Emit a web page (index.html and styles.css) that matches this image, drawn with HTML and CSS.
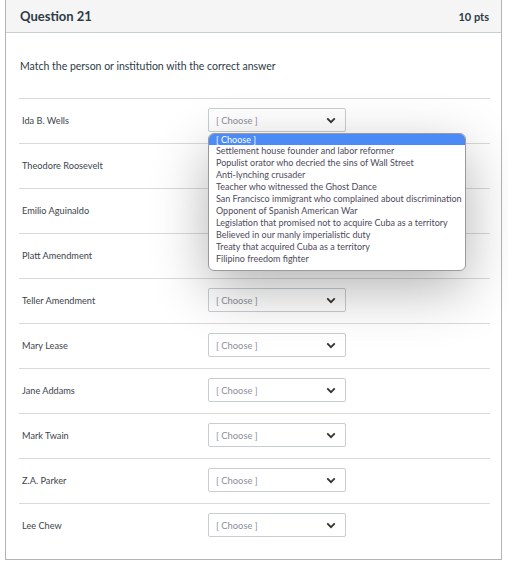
FILE: index.html
```html
<!DOCTYPE html>
<html>
<head>
<meta charset="utf-8">
<link rel="stylesheet" href="styles.css">
</head>
<body>
<div class="question">
  <div class="header">
    <span class="title">Question 21</span>
    <span class="pts">10 pts</span>
  </div>
  <div class="content">
    <p class="prompt">Match the person or institution with the correct answer</p>
    <div class="rows">
      <div class="row"><span class="label">Ida B. Wells</span><div class="select"><span>[ Choose ]</span><svg class="chev" viewBox="0 0 12 8"><path d="M1.5 1.5 L6 6 L10.5 1.5" fill="none" stroke="#333" stroke-width="2.2"/></svg></div></div>
      <div class="row"><span class="label">Theodore Roosevelt</span><div class="select"><span>[ Choose ]</span><svg class="chev" viewBox="0 0 12 8"><path d="M1.5 1.5 L6 6 L10.5 1.5" fill="none" stroke="#333" stroke-width="2.2"/></svg></div></div>
      <div class="row"><span class="label">Emilio Aguinaldo</span><div class="select"><span>[ Choose ]</span><svg class="chev" viewBox="0 0 12 8"><path d="M1.5 1.5 L6 6 L10.5 1.5" fill="none" stroke="#333" stroke-width="2.2"/></svg></div></div>
      <div class="row"><span class="label">Platt Amendment</span><div class="select"><span>[ Choose ]</span><svg class="chev" viewBox="0 0 12 8"><path d="M1.5 1.5 L6 6 L10.5 1.5" fill="none" stroke="#333" stroke-width="2.2"/></svg></div></div>
      <div class="row"><span class="label">Teller Amendment</span><div class="select"><span>[ Choose ]</span><svg class="chev" viewBox="0 0 12 8"><path d="M1.5 1.5 L6 6 L10.5 1.5" fill="none" stroke="#333" stroke-width="2.2"/></svg></div></div>
      <div class="row"><span class="label">Mary Lease</span><div class="select"><span>[ Choose ]</span><svg class="chev" viewBox="0 0 12 8"><path d="M1.5 1.5 L6 6 L10.5 1.5" fill="none" stroke="#333" stroke-width="2.2"/></svg></div></div>
      <div class="row"><span class="label">Jane Addams</span><div class="select"><span>[ Choose ]</span><svg class="chev" viewBox="0 0 12 8"><path d="M1.5 1.5 L6 6 L10.5 1.5" fill="none" stroke="#333" stroke-width="2.2"/></svg></div></div>
      <div class="row"><span class="label">Mark Twain</span><div class="select"><span>[ Choose ]</span><svg class="chev" viewBox="0 0 12 8"><path d="M1.5 1.5 L6 6 L10.5 1.5" fill="none" stroke="#333" stroke-width="2.2"/></svg></div></div>
      <div class="row"><span class="label">Z.A. Parker</span><div class="select"><span>[ Choose ]</span><svg class="chev" viewBox="0 0 12 8"><path d="M1.5 1.5 L6 6 L10.5 1.5" fill="none" stroke="#333" stroke-width="2.2"/></svg></div></div>
      <div class="row"><span class="label">Lee Chew</span><div class="select"><span>[ Choose ]</span><svg class="chev" viewBox="0 0 12 8"><path d="M1.5 1.5 L6 6 L10.5 1.5" fill="none" stroke="#333" stroke-width="2.2"/></svg></div></div>
    </div>
  </div>
</div>
<ul class="dropdown">
  <li class="selected">[ Choose ]</li>
  <li>Settlement house founder and labor reformer</li>
  <li>Populist orator who decried the sins of Wall Street</li>
  <li>Anti-lynching crusader</li>
  <li>Teacher who witnessed the Ghost Dance</li>
  <li>San Francisco immigrant who complained about discrimination</li>
  <li>Opponent of Spanish American War</li>
  <li>Legislation that promised not to acquire Cuba as a territory</li>
  <li>Believed in our manly imperialistic duty</li>
  <li>Treaty that acquired Cuba as a territory</li>
  <li>Filipino freedom fighter</li>
</ul>
</body>
</html>
```

FILE: styles.css
```css
html, body {
  margin: 0;
  padding: 0;
  background: #fff;
  font-family: Lato, "Open Sans", sans-serif;
  color: #2d3b45;
}
.question {
  margin-left: 5px;
  width: 495px;
  border: 1px solid #b4b4b4;
  border-top: none;
}
.header {
  height: 32px;
  background: #f5f5f5;
  border-bottom: 1px solid #c7cdd1;
  display: flex;
  align-items: center;
  justify-content: space-between;
  padding: 0 12px 0 14px;
}
.title {
  font-size: 13px;
  font-weight: 700;
  color: #2d3b45;
}
.pts {
  font-size: 11px;
  font-weight: 700;
  color: #2d3b45;
}
.content {
  padding: 0 11px 11px 13px;
}
.prompt {
  margin: 0;
  padding: 26px 0 0 1px;
  height: 39px;
  font-size: 10.5px;
  line-height: 14px;
  color: #2d3b45;
}
.row {
  height: 42px;
  padding-bottom: 2px;
  border-top: 1px solid #dadada;
  display: flex;
  align-items: center;
}
.label {
  width: 186px;
  padding-left: 3px;
  font-size: 9.2px;
  color: #3d454c;
}
.select {
  height: 22px;
  border: 1px solid #c7cdd1;
  border-radius: 2px;
  background: #fff;
  display: flex;
  align-items: center;
  justify-content: space-between;
  padding: 0 9px 0 7px;
  box-sizing: content-box;
  width: 120px;
  font-size: 9.4px;
  color: #8b8f9a;
}
.chev {
  width: 10px;
  height: 7px;
}
.dropdown {
  position: absolute;
  left: 208px;
  top: 133px;
  width: 256px;
  margin: 0;
  padding: 0 0 5px 0;
  list-style: none;
  background: #fff;
  border: 1px solid #9a9a9a;
  border-radius: 6px;
  box-shadow: 0 18px 55px rgba(0, 0, 0, 0.3);
  font-size: 9px;
  line-height: 12px;
  color: #4e4a5c;
  overflow: hidden;
}
.dropdown li {
  padding-left: 7px;
  white-space: nowrap;
}
.dropdown li.selected {
  background: #4c8bf5;
  color: #fff;
  height: 11px;
  line-height: 11px;
}
```
